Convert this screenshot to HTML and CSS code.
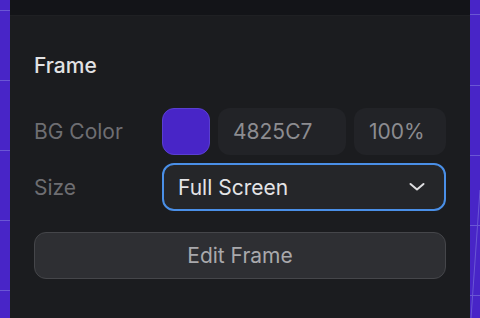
FILE: index.html
```html
<!DOCTYPE html>
<html>
<head>
<meta name="viewport" content="width=device-width, minimum-scale=1.0">
<link rel="stylesheet" href="styles.css">
</head>
<body>
<div class="canvas">
  <svg class="strip" width="10" height="318" viewBox="0 0 10 318">
    <rect width="10" height="318" fill="#4825c7"/>
    <g stroke="#6a56d4" stroke-width="1">
      <line x1="0" y1="10.5" x2="10" y2="10.5"/>
      <line x1="0" y1="80.5" x2="10" y2="80.5"/>
      <line x1="0" y1="150.5" x2="10" y2="150.5"/>
      <line x1="0" y1="220.5" x2="10" y2="220.5"/>
      <line x1="0" y1="290.5" x2="10" y2="290.5"/>
    </g>
  </svg>

  <div class="panel">
    <div class="panel-top"></div>
    <div class="panel-body">
      <div class="section-title">Frame</div>

      <div class="row">
        <div class="label">BG Color</div>
        <div class="fields">
          <div class="swatch"></div>
          <div class="field hex">4825C7</div>
          <div class="field pct">100%</div>
        </div>
      </div>

      <div class="row">
        <div class="label">Size</div>
        <div class="select">
          <span>Full Screen</span>
          <svg width="16" height="10" viewBox="0 0 16 10">
            <path d="M1.5 2 L8 7.5 L14.5 2" fill="none" stroke="#dedee0" stroke-width="2" stroke-linecap="round" stroke-linejoin="round"/>
          </svg>
        </div>
      </div>

      <div class="button">Edit Frame</div>
    </div>
  </div>

  <svg class="strip" width="10" height="318" viewBox="0 0 10 318">
    <rect width="10" height="318" fill="#4825c7"/>
    <g stroke="#6a56d4" stroke-width="1">
      <line x1="0" y1="14.5" x2="10" y2="14.5"/>
      <line x1="0" y1="85.5" x2="10" y2="85.5"/>
      <line x1="0" y1="155.5" x2="10" y2="155.5"/>
      <line x1="0" y1="225.5" x2="10" y2="225.5"/>
      <line x1="0" y1="295.5" x2="10" y2="295.5"/>
      <line x1="10" y1="190" x2="1" y2="318"/>
    </g>
  </svg>
</div>
</body>
</html>
```

FILE: styles.css
```css
body {
  margin: 0;
  overflow: hidden;
  background: #4825c7;
  font-family: Inter, "Noto Sans", sans-serif;
}

.canvas {
  display: flex;
  width: 480px;
  height: 318px;
}

.strip {
  display: block;
  flex: none;
}

.panel {
  width: 460px;
  background: #1b1c1f;
  display: flex;
  flex-direction: column;
}

.panel-top {
  height: 16px;
  background: #131418;
  border-bottom: 1px solid #1f2023;
  box-sizing: border-box;
}

.panel-body {
  padding: 0 24px;
  display: flex;
  flex-direction: column;
}

.section-title {
  color: #e2e2e4;
  font-size: 21px;
  font-weight: 500;
  margin-top: 38px;
  line-height: 24px;
  margin-bottom: 30px;
}

.row {
  display: flex;
  align-items: center;
  margin-bottom: 8px;
}

.label {
  width: 128px;
  color: #6e6e72;
  font-size: 21px;
}

.fields {
  display: flex;
  gap: 8px;
  flex: 1;
}

.swatch {
  width: 48px;
  height: 47px;
  border-radius: 12px;
  background: #4825c7;
  border: 1px solid #5a3fd0;
  box-sizing: border-box;
}

.field {
  height: 47px;
  border-radius: 12px;
  background: #222327;
  color: #8c8c90;
  font-size: 21px;
  display: flex;
  align-items: center;
  padding-left: 15px;
  box-sizing: border-box;
}

.hex {
  width: 128px;
}

.pct {
  width: 92px;
}

.select {
  flex: 1;
  height: 48px;
  box-sizing: border-box;
  border: 2px solid #4a8fe7;
  border-radius: 12px;
  background: #252629;
  color: #e4e4e6;
  font-size: 21px;
  display: flex;
  align-items: center;
  justify-content: space-between;
  padding: 0 19px 0 14px;
}

.button {
  margin-top: 13px;
  height: 47px;
  box-sizing: border-box;
  border: 1px solid #45464a;
  border-radius: 12px;
  background: #2e2f33;
  color: #a9a9ac;
  font-size: 21px;
  display: flex;
  align-items: center;
  justify-content: center;
}
```
